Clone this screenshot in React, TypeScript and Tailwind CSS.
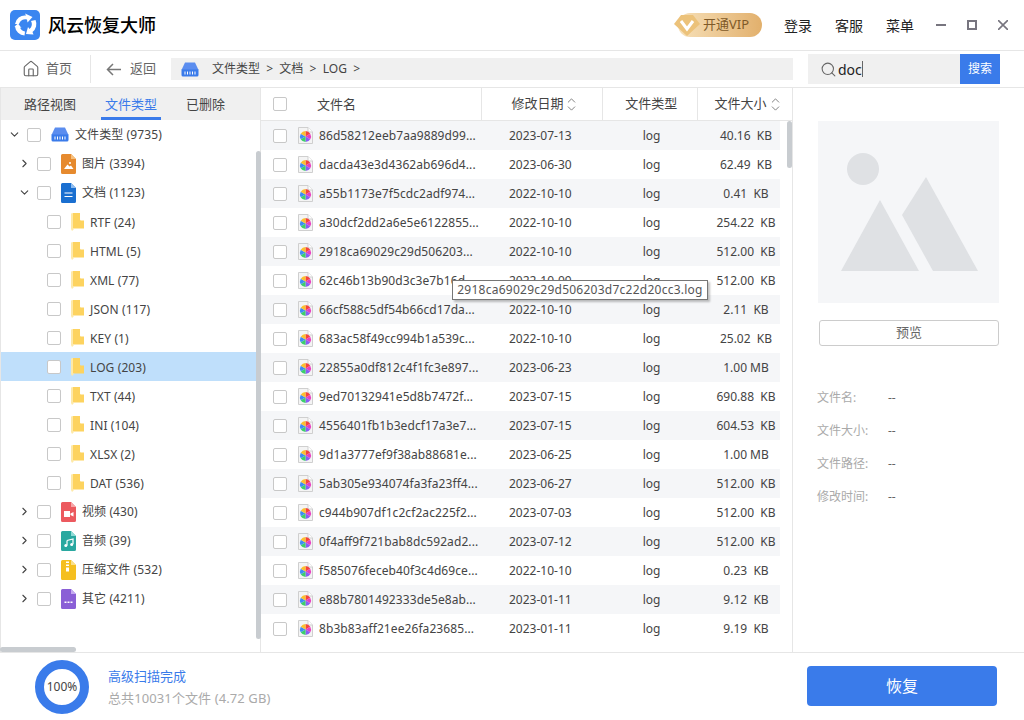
import { House, Search, ChevronRight, ChevronDown, ChevronUp } from 'lucide-react';

const files = [
  ['86d58212eeb7aa9889d99...', '2023-07-13', '40.16  KB'],
  ['dacda43e3d4362ab696d4...', '2023-06-30', '62.49  KB'],
  ['a55b1173e7f5cdc2adf974...', '2022-10-10', '0.41  KB'],
  ['a30dcf2dd2a6e5e6122855...', '2022-10-10', '254.22  KB'],
  ['2918ca69029c29d506203...', '2022-10-10', '512.00  KB'],
  ['62c46b13b90d3c3e7b16d...', '2022-10-09', '512.00  KB'],
  ['66cf588c5df54b66cd17da...', '2022-10-10', '2.11  KB'],
  ['683ac58f49cc994b1a539c...', '2022-10-10', '25.02  KB'],
  ['22855a0df812c4f1fc3e897...', '2023-06-23', '1.00 MB'],
  ['9ed70132941e5d8b7472f...', '2023-07-15', '690.88  KB'],
  ['4556401fb1b3edcf17a3e7...', '2023-07-15', '604.53  KB'],
  ['9d1a3777ef9f38ab88681e...', '2023-06-25', '1.00 MB'],
  ['5ab305e934074fa3fa23ff4...', '2023-06-27', '512.00  KB'],
  ['c944b907df1c2cf2ac225f2...', '2023-07-03', '512.00  KB'],
  ['0f4aff9f721bab8dc592ad2...', '2023-07-12', '512.00  KB'],
  ['f585076feceb40f3c4d69ce...', '2022-10-10', '0.23  KB'],
  ['e88b7801492333de5e8ab...', '2023-01-11', '9.12  KB'],
  ['8b3b83aff21ee26fa23685...', '2023-01-11', '9.19  KB'],
];

const leaves = ['RTF (24)', 'HTML (5)', 'XML (77)', 'JSON (117)', 'KEY (1)', 'LOG (203)', 'TXT (44)', 'INI (104)', 'XLSX (2)', 'DAT (536)'];

function Check() {
  return <span className="block w-[14px] h-[14px] shrink-0 rounded-[2px] border border-[#c8c8c8] bg-white" />;
}

function DriveIcon() {
  return (
    <svg width="18" height="15" viewBox="0 0 18 15" className="shrink-0">
      <path d="M4 0.5h10l3.500 7.500h-17z" fill="#5b8def" />
      <path d="M0.5 7.500h17v5.500a1.500 1.500 0 0 1-1.500 1.500h-14a1.500 1.500 0 0 1-1.500-1.500z" fill="#3a7bea" />
      <path d="M4 9.500v3M6.500 9.500v3M9 9.500v3M11.500 9.500v3M14 9.500v3" stroke="#fff" strokeWidth="1" />
    </svg>
  );
}

function TypeIcon({ color, fold, children }: { color: string; fold: string; children?: React.ReactNode }) {
  return (
    <svg width="15" height="20" viewBox="0 0 15 20" className="shrink-0">
      <path d="M1.500 0H10l5 5v13.500a1.500 1.500 0 0 1-1.500 1.500h-12A1.500 1.500 0 0 1 0 18.500v-17A1.500 1.500 0 0 1 1.500 0z" fill={color} />
      <path d="M10 0l5 5h-5z" fill={fold} />
      {children}
    </svg>
  );
}

function FolderIcon() {
  return (
    <svg width="13" height="18" viewBox="0 0 13 18" className="shrink-0">
      <path d="M2 0h7v6.500a1 1 0 0 0 1 1h3V15.500H2z" fill="#fdd35f" />
      <path d="M0 .5L2 0v15.500L3.500 15.500 1 18 0 16z" fill="#fee9a8" />
    </svg>
  );
}

function LogIcon() {
  return (
    <svg width="15" height="17" viewBox="0 0 15 17" className="shrink-0">
      <path d="M.5.500h9.500l4.500 4.500v11.500H.5z" fill="#f4f4f4" stroke="#cfcfcf" />
      <path d="M10 .5V5h4.500" fill="#fff" stroke="#cfcfcf" />
      <path d="M7.500 9.500V4A5.500 5.500 0 0 1 12.260 6.750z" fill="#f4433c" />
      <path d="M7.500 9.500l4.760-2.750A5.500 5.500 0 0 1 12.260 12.250z" fill="#e83fc0" />
      <path d="M7.500 9.500l4.760 2.750A5.500 5.500 0 0 1 7.500 15z" fill="#8a5cf5" />
      <path d="M7.500 9.500V15A5.500 5.500 0 0 1 2.740 12.250z" fill="#3ccf6b" />
      <path d="M7.500 9.500l-4.760 2.750A5.500 5.500 0 0 1 2.740 6.750z" fill="#3f8cf5" />
      <path d="M7.500 9.500L2.740 6.750A5.500 5.500 0 0 1 7.500 4z" fill="#fbc02d" />
    </svg>
  );
}

function TreeGroup({ label, open, children }: { label: string; open?: boolean; children: React.ReactNode }) {
  return (
    <div className="flex items-center h-[29px] shrink-0 pl-[17px]">
      <span className="w-[12px] shrink-0 text-[#444]">
        {open ? <ChevronDown size={13} strokeWidth={2} /> : <ChevronRight size={13} strokeWidth={2} />}
      </span>
      <span className="ml-[7px]"><Check /></span>
      <span className="ml-[10px] w-[21px] shrink-0">{children}</span>
      <span className="text-[12px] text-[#444] tracking-[0.1px] whitespace-pre">{label}</span>
    </div>
  );
}

function SortIcon() {
  return (
    <span className="flex flex-col text-[#666] ml-[2px]">
      <ChevronUp size={13} strokeWidth={1.5} className="-mb-[5px]" />
      <ChevronDown size={13} strokeWidth={1.5} />
    </span>
  );
}

export default function App() {
  return (
    <div className="relative w-[1024px] h-[720px] overflow-hidden bg-white flex flex-col font-['Noto_Sans','Noto_Sans_CJK_SC',sans-serif] text-[#444]">
      {/* title bar */}
      <div className="h-[51px] shrink-0 flex items-center border-b border-[#e6e6e6] pl-[10px]">
        <svg width="30" height="30" viewBox="0 0 30 30" className="shrink-0">
          <rect width="30" height="30" rx="5" fill="#3a86f0" />
          <path d="M5 14a10 10 0 0 1 11-8.500l-1-2 7.500 3.500-5 5.500-.5-3a6.500 6.500 0 0 0-8 4.500z" fill="#fff" />
          <path d="M25.500 10a10 10 0 0 1-3 12l1 2.500-7.500-.5 2-7 1.500 2a6.500 6.500 0 0 0 1.500-8z" fill="#fff" />
          <path d="M5 16.500a10 10 0 0 0 9.500 9l.5-4a6.500 6.500 0 0 1-5-4l1.500.5L8 13.500 4 17z" fill="#fff" />
        </svg>
        <span className="ml-2 text-[18px] font-medium text-black">风云恢复大师</span>
        <div className="ml-auto flex items-center">
          <div className="relative flex items-center justify-end w-[84px] h-[24px] rounded-full bg-gradient-to-r from-[#f6e0b8] to-[#e2b06c] pr-[13px] text-[13px] text-[#7f5a28]">
            <svg width="26" height="24" viewBox="0 0 26 24" className="absolute -left-[4px] top-0">
              <path d="M7 2h12l7 9-13 12L0 11z" fill="#ecc27a" />
              <path d="M7 8l6 8 6-8" fill="none" stroke="#fff" strokeWidth="3" />
            </svg>
            开通VIP
          </div>
          <span className="ml-[22px] text-[14px] text-[#222]">登录</span>
          <span className="ml-[23px] text-[14px] text-[#222]">客服</span>
          <span className="ml-[23px] text-[14px] text-[#222]">菜单</span>
          <div className="ml-[22px] mr-[16px] flex items-center gap-[21px]">
            <svg width="10" height="10" viewBox="0 0 10 10"><path d="M0 5h10" stroke="#77757f" strokeWidth="2" /></svg>
            <svg width="10" height="10" viewBox="0 0 10 10"><rect x="1" y="1" width="8" height="8" fill="none" stroke="#77757f" strokeWidth="2" /></svg>
            <svg width="10" height="10" viewBox="0 0 10 10"><path d="M0 0l10 10M10 0L0 10" stroke="#77757f" strokeWidth="1.600" /></svg>
          </div>
        </div>
      </div>

      {/* toolbar */}
      <div className="h-[37px] shrink-0 flex items-center border-b border-[#e6e6e6]">
        <div className="w-[91px] h-[28px] shrink-0 flex items-center pl-[22px] border-r border-[#e6e6e6]">
          <House size={18} strokeWidth={1.5} className="text-[#666]" />
          <span className="ml-[6px] text-[13px] text-[#666]">首页</span>
        </div>
        <div className="w-[80px] shrink-0 flex items-center pl-[15px]">
          <svg width="15" height="13" viewBox="0 0 15 13" fill="none" stroke="#777" strokeWidth="1.500">
            <path d="M15 6.500H1.500M7 1L1.500 6.500 7 12" />
          </svg>
          <span className="ml-[9px] text-[13px] text-[#666]">返回</span>
        </div>
        <div className="w-[622px] h-[22px] shrink-0 flex items-center pl-[10px] bg-[#f0f0f0]">
          <DriveIcon />
          <span className="ml-[13px] text-[12px] text-[#444] whitespace-pre">文件类型  {'>'}  文档  {'>'}  LOG  {'>'}</span>
        </div>
        <div className="ml-[15px] w-[152px] h-[30px] flex items-center pl-[12px] bg-[#f0f0f0]">
          <Search size={17} strokeWidth={1.5} className="text-[#666]" />
          <span className="ml-px text-[14px] text-[#222]">doc</span>
          <span className="w-px h-[16px] bg-[#666]" />
        </div>
        <div className="w-[40px] h-[30px] flex items-center justify-center bg-[#3a7bea] text-white text-[12px]">搜索</div>
      </div>

      {/* main */}
      <div className="h-[565px] shrink-0 flex border-b border-[#e6e6e6]">
        <div className="relative w-[261px] shrink-0 flex flex-col border-r border-l border-[#e6e6e6]">
          <div className="h-[32px] shrink-0 flex bg-[#f0f0f0] text-[13px] text-[#444]">
            <span className="w-[100px] pl-[23px] leading-[32px]">路径视图</span>
            <span className="w-[60px] text-center leading-[32px] text-[#3a7bea] border-b-[3px] border-[#3a7bea]">文件类型</span>
            <span className="ml-[25px] leading-[32px]">已删除</span>
          </div>
          <div className="flex items-center h-[29px] shrink-0 pl-[7px]">
            <span className="w-[12px] shrink-0 text-[#444]"><ChevronDown size={13} strokeWidth={2} /></span>
            <span className="ml-[7px]"><Check /></span>
            <span className="ml-[10px] w-[24px] shrink-0"><DriveIcon /></span>
            <span className="text-[12px] text-[#444] tracking-[0.1px]">文件类型 (9735)</span>
          </div>
          <TreeGroup label="图片 (3394)">
            <TypeIcon color="#e68a2e" fold="#f6c07e">
              <circle cx="9" cy="9" r="1" fill="#fff" />
              <path d="M3 15l3.500-4.500 2 2 1.500-1 2.500 3.500z" fill="#fff" />
            </TypeIcon>
          </TreeGroup>
          <TreeGroup label="文档 (1123)" open>
            <TypeIcon color="#1a6fd0" fold="#8fbdf0">
              <path d="M3.500 10h8M3.500 13.500h8" stroke="#fff" strokeWidth="1.200" />
            </TypeIcon>
          </TreeGroup>
          {leaves.map((l) => (
            <div key={l} className={`flex items-center h-[29px] shrink-0 pl-[46px] ${l.startsWith('LOG') ? 'bg-[#bfdffb]' : ''}`}>
              <Check />
              <span className="ml-[10px] w-[19px] shrink-0"><FolderIcon /></span>
              <span className="pt-[2px] text-[12px] text-[#444] tracking-[0.1px]">{l}</span>
            </div>
          ))}
          <TreeGroup label="视频 (430)">
            <TypeIcon color="#ec5a5f" fold="#f6a6a8">
              <path d="M3 9h6v6H3zM9.500 11.500l3-1.500v4.500l-3-1.500z" fill="#fff" />
            </TypeIcon>
          </TreeGroup>
          <TreeGroup label="音频 (39)">
            <TypeIcon color="#2aa8a0" fold="#8fdcd6">
              <path d="M6 9.500l6-1.500v5" fill="none" stroke="#fff" strokeWidth="1.200" />
              <circle cx="4.800" cy="14.500" r="1.500" fill="#fff" />
              <circle cx="10.700" cy="13.500" r="1.500" fill="#fff" />
              <path d="M6 9.500V14.500" stroke="#fff" strokeWidth="1.200" />
            </TypeIcon>
          </TreeGroup>
          <TreeGroup label="压缩文件 (532)">
            <TypeIcon color="#f5bf1f" fold="#fae08a">
              <path d="M5 1.500h3v1.500H5zM5 4.500h3V6H5zM5 7.500h3v4H5z" fill="#fff" />
            </TypeIcon>
          </TreeGroup>
          <TreeGroup label="其它 (4211)">
            <TypeIcon color="#8a5fd6" fold="#c4aaf0">
              <path d="M3.500 12.500h2V14h-2zM6.500 12.500h2V14h-2zM9.500 12.500h2V14h-2z" fill="#fff" />
            </TypeIcon>
          </TreeGroup>
          <div className="absolute left-[255px] top-[63px] w-[5px] h-[488px] rounded-full bg-[#c8ccd0]" />
          <div className="absolute -left-px bottom-0 w-[76px] h-[5px] rounded-full bg-[#c8ccd0]" />
        </div>

        <div className="relative w-[532px] shrink-0 border-r border-[#e6e6e6]">
          <div className="h-[33px] flex items-center text-[13px] text-[#444] border-b border-[#e6e6e6] pl-[12px]">
            <div className="w-[209px] h-full flex items-center border-r border-[#e6e6e6]">
              <Check />
              <span className="ml-[30px] pt-[2px]">文件名</span>
            </div>
            <div className="w-[122px] h-full flex items-center justify-center pl-[6px] border-r border-[#e6e6e6]">修改日期<SortIcon /></div>
            <div className="w-[95px] h-full flex items-center justify-center pl-[2px] border-r border-[#e6e6e6]">文件类型</div>
            <div className="w-[94px] h-full flex items-center justify-center pl-[6px]">文件大小<SortIcon /></div>
          </div>
          {files.map((f, i) => (
            <div key={f[0]} className={`w-[519px] h-[29px] flex items-center text-[12px] text-[#444] ${i % 2 === 0 ? 'bg-[#f5f6f8]' : ''}`}>
              <div className="w-[221px] shrink-0 flex items-center pl-[12px] overflow-hidden">
                <Check />
                <span className="ml-[11px]"><LogIcon /></span>
                <span className="ml-[6px] whitespace-nowrap tracking-[0.08px]">{f[0]}</span>
              </div>
              <div className="w-[122px] shrink-0 pl-[27px]">{f[1]}</div>
              <div className="w-[95px] shrink-0 text-center">log</div>
              <div className="flex-1 pl-[13px] text-center whitespace-pre">{f[2]}</div>
            </div>
          ))}
          <div className="absolute right-0 top-[33px] w-[5px] h-[47px] rounded-full bg-[#c8ccd0]" />
        </div>

        <div className="flex-1 pt-[33px] pl-[25px]">
          <div className="w-[181px] h-[182px] bg-[#f5f6f8]">
            <svg width="181" height="182" viewBox="0 0 181 182">
              <circle cx="45" cy="48" r="16" fill="#dfe1e4" />
              <path d="M23 150l39-71 39 71z" fill="#dfe1e4" />
              <path d="M84 94l24-38 52 94h-45z" fill="#dfe1e4" />
            </svg>
          </div>
          <div className="mt-[17px] ml-px w-[180px] h-[26px] flex items-center justify-center rounded-[3px] border border-[#ccc] text-[13px] text-[#666]">预览</div>
          <div className="mt-[35px] -ml-px flex flex-col text-[12px] text-[#aaa]">
            {['文件名:', '文件大小:', '文件路径:', '修改时间:'].map((m) => (
              <div key={m} className="h-[33px] flex items-center">
                <span className="w-[71px]">{m}</span>
                <span className="text-[#666]">--</span>
              </div>
            ))}
          </div>
        </div>
      </div>

      {/* footer */}
      <div className="flex-1 flex items-center pl-[35px] pr-[27px]">
        <div className="w-[54px] h-[54px] shrink-0 rounded-full border-[9px] border-[#3a7bea] flex items-center justify-center text-[12px] text-[#444] whitespace-nowrap">100%</div>
        <div className="ml-[19px] pt-[2px] flex flex-col gap-[3px]">
          <span className="text-[13px] text-[#3a7bea]">高级扫描完成</span>
          <span className="text-[13px] text-[#aaa] tracking-[0.1px]">总共10031个文件 (4.72 GB)</span>
        </div>
        <div className="ml-auto mb-[2px] w-[190px] h-[40px] flex items-center justify-center rounded-[4px] bg-[#3a7bea] text-white text-[16px]">恢复</div>
      </div>

      {/* tooltip over the table */}
      <div className="absolute left-[452px] top-[280px] h-[20px] w-[256px] flex items-center justify-center bg-white border border-[#767676] shadow-[2px_2px_2px_rgba(0,0,0,0.25)] text-[12px] text-[#555] whitespace-nowrap tracking-[0.25px]">
        2918ca69029c29d506203d7c22d20cc3.log
      </div>
    </div>
  );
}
